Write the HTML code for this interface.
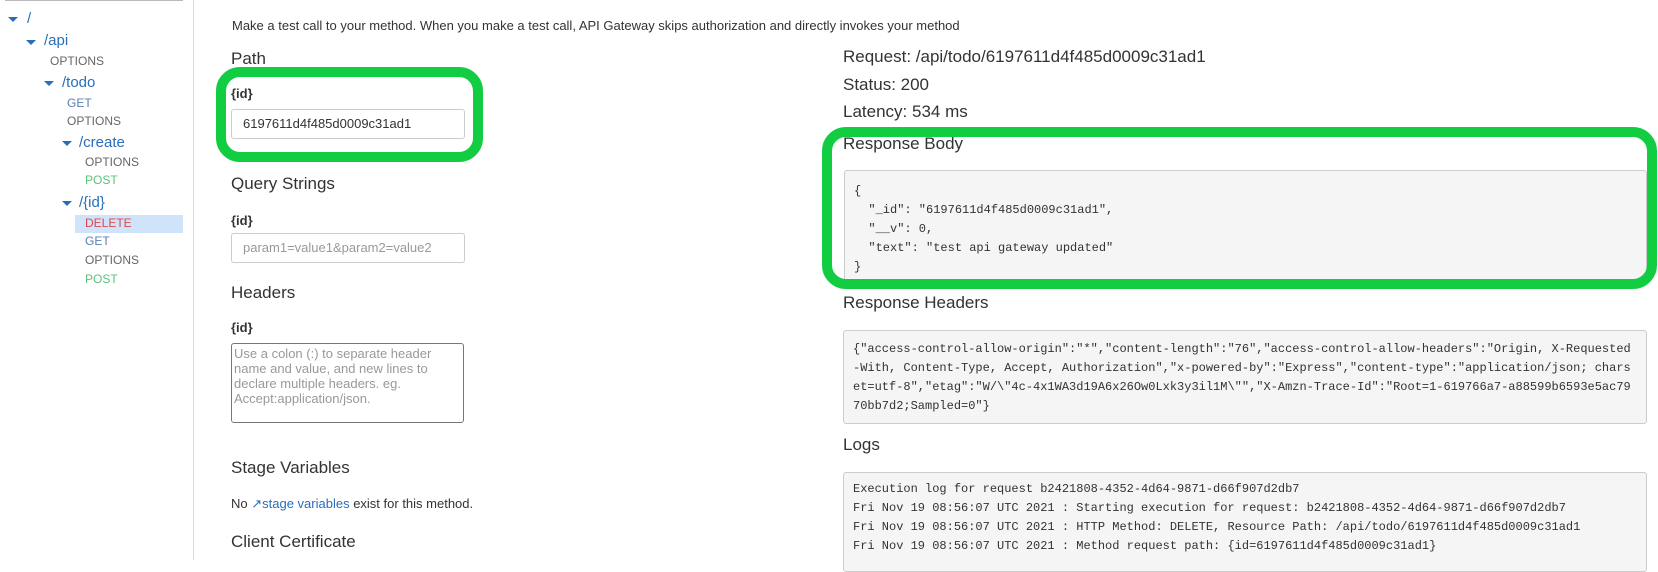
<!DOCTYPE html>
<html><head><style>
body{margin:0;width:1658px;height:560px;overflow:hidden;background:#fff;font-family:"Liberation Sans",Arial,sans-serif;color:#333;position:relative}
.a{position:absolute;white-space:nowrap}
.lnk{color:#2a6ebb;font-size:15px;line-height:17px}
.m{font-size:12px;line-height:14px;color:#666}
.tri{position:absolute;width:0;height:0;border-left:5px solid transparent;border-right:5px solid transparent;border-top:5px solid #2a6ebb}
h4{position:absolute;margin:0;font-weight:normal;font-size:17px;line-height:20px;color:#333;white-space:nowrap}
.lbl{position:absolute;font-weight:bold;font-size:13px;color:#333}
.inp{position:absolute;border:1px solid #ccc;border-radius:3px;background:#fff;font-size:13px;box-sizing:border-box;padding:0 11px}
pre{position:absolute;margin:0;background:#f5f5f5;border:1px solid #ccc;border-radius:3px;box-sizing:border-box;font-family:"Liberation Mono",monospace;font-size:12px;line-height:19px;color:#333;padding:10px 9px;white-space:pre;overflow:hidden}
.g{position:absolute;border:10px solid #12cc42;border-radius:24px;box-sizing:border-box}
</style></head><body>
<div class="a" style="left:5px;top:0;width:178px;height:1px;background:#bbb"></div>
<div class="a" style="left:193px;top:0;width:1px;height:560px;background:#ddd"></div>

<div class="tri" style="left:8px;top:17px"></div><div class="a lnk" style="left:27px;top:10px">/</div>
<div class="tri" style="left:26px;top:40px"></div><div class="a lnk" style="left:44px;top:32px">/api</div>
<div class="a m" style="left:50px;top:54px">OPTIONS</div>
<div class="tri" style="left:44px;top:81px"></div><div class="a lnk" style="left:62px;top:74px">/todo</div>
<div class="a m" style="left:67px;top:96px;color:#5a7fb0">GET</div>
<div class="a m" style="left:67px;top:114px">OPTIONS</div>
<div class="tri" style="left:62px;top:141px"></div><div class="a lnk" style="left:79px;top:134px">/create</div>
<div class="a m" style="left:85px;top:155px">OPTIONS</div>
<div class="a m" style="left:85px;top:173px;color:#5cc27a">POST</div>
<div class="tri" style="left:62px;top:201px"></div><div class="a lnk" style="left:79px;top:194px">/{id}</div>
<div class="a" style="left:75px;top:215px;width:108px;height:18px;background:#cfe3fa"></div>
<div class="a m" style="left:85px;top:216px;color:#e0474c">DELETE</div>
<div class="a m" style="left:85px;top:234px;color:#5a7fb0">GET</div>
<div class="a m" style="left:85px;top:253px">OPTIONS</div>
<div class="a m" style="left:85px;top:272px;color:#5cc27a">POST</div>

<div class="a" style="left:232px;top:18px;font-size:13px;color:#333">Make a test call to your method. When you make a test call, API Gateway skips authorization and directly invokes your method</div>

<h4 style="left:231px;top:49px">Path</h4>
<div class="lbl" style="left:231px;top:86px">{id}</div>
<div class="inp" style="left:231px;top:109px;width:234px;height:30px;line-height:28px;color:#333">6197611d4f485d0009c31ad1</div>
<div class="g" style="left:216px;top:67px;width:267px;height:95px"></div>

<h4 style="left:231px;top:174px">Query Strings</h4>
<div class="lbl" style="left:231px;top:213px">{id}</div>
<div class="inp" style="left:231px;top:233px;width:234px;height:30px;line-height:28px;color:#999">param1=value1&amp;param2=value2</div>

<h4 style="left:231px;top:283px">Headers</h4>
<div class="lbl" style="left:231px;top:320px">{id}</div>
<div class="inp" style="left:231px;top:343px;width:233px;height:80px;padding:2px 2px;line-height:15px;color:#999;white-space:normal;border-color:#777">Use a colon (:) to separate header name and value, and new lines to declare multiple headers. eg. Accept:application/json.</div>

<h4 style="left:231px;top:458px">Stage Variables</h4>
<div class="a" style="left:231px;top:496px;font-size:13px">No <span style="color:#2a6ebb">&#x2197;stage variables</span> exist for this method.</div>
<h4 style="left:231px;top:532px">Client Certificate</h4>

<h4 style="left:843px;top:47px">Request: /api/todo/6197611d4f485d0009c31ad1</h4>
<h4 style="left:843px;top:75px">Status: 200</h4>
<h4 style="left:843px;top:102px">Latency: 534 ms</h4>
<h4 style="left:843px;top:134px">Response Body</h4>
<pre style="left:844px;top:170px;width:803px;height:113px;padding-top:11px">{
  "_id": "6197611d4f485d0009c31ad1",
  "__v": 0,
  "text": "test api gateway updated"
}</pre>
<div class="g" style="left:822px;top:127px;width:835px;height:162px"></div>

<h4 style="left:843px;top:293px">Response Headers</h4>
<pre style="left:843px;top:330px;width:804px;height:94px;padding-top:9px">{"access-control-allow-origin":"*","content-length":"76","access-control-allow-headers":"Origin, X-Requested
-With, Content-Type, Accept, Authorization","x-powered-by":"Express","content-type":"application/json; chars
et=utf-8","etag":"W/\"4c-4x1WA3d19A6x26Ow0Lxk3y3il1M\"","X-Amzn-Trace-Id":"Root=1-619766a7-a88599b6593e5ac79
70bb7d2;Sampled=0"}</pre>

<h4 style="left:843px;top:435px">Logs</h4>
<pre style="left:843px;top:472px;width:804px;height:100px;padding-top:7px">Execution log for request b2421808-4352-4d64-9871-d66f907d2db7
Fri Nov 19 08:56:07 UTC 2021 : Starting execution for request: b2421808-4352-4d64-9871-d66f907d2db7
Fri Nov 19 08:56:07 UTC 2021 : HTTP Method: DELETE, Resource Path: /api/todo/6197611d4f485d0009c31ad1
Fri Nov 19 08:56:07 UTC 2021 : Method request path: {id=6197611d4f485d0009c31ad1}</pre>
</body></html>
